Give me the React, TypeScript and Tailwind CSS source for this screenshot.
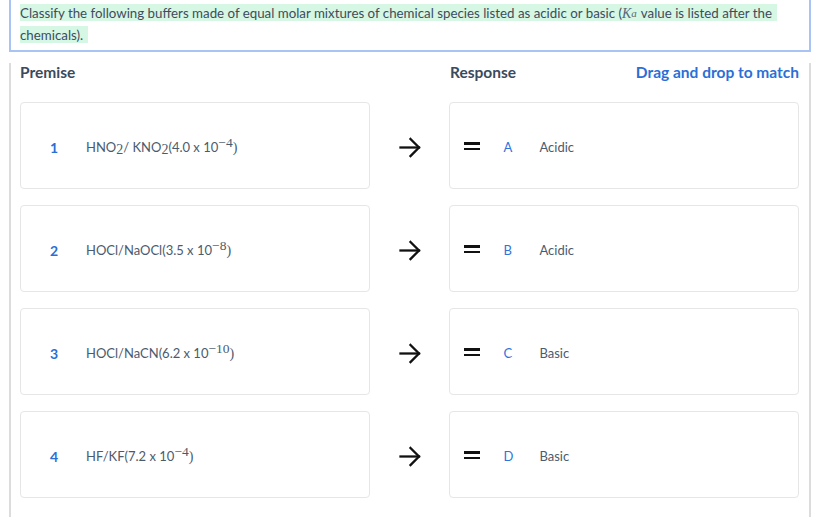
const premises = [
  { n: "1", pre: "HNO", sub: true, mid: "/ KNO", sub2: true, val: "(4.0 x 10", exp: "\u22124" },
  { n: "2", pre: "HOCl/NaOCl", sub: false, mid: "", sub2: false, val: "(3.5 x 10", exp: "\u22128" },
  { n: "3", pre: "HOCl/NaCN", sub: false, mid: "", sub2: false, val: "(6.2 x 10", exp: "\u221210" },
  { n: "4", pre: "HF/KF", sub: false, mid: "", sub2: false, val: "(7.2 x 10", exp: "\u22124" },
];

const responses = [
  { l: "A", t: "Acidic" },
  { l: "B", t: "Acidic" },
  { l: "C", t: "Basic" },
  { l: "D", t: "Basic" },
];

function Sub2() {
  return <span className="text-[14px] font-['Liberation_Serif',serif] relative top-[2px]">2</span>;
}

function Formula({ p }: { p: (typeof premises)[number] }) {
  return (
    <span className="text-[13px] text-[#4b5b6e] whitespace-pre">
      {p.pre}
      {p.sub && <Sub2 />}
      {p.mid}
      {p.sub2 && <Sub2 />}
      {p.val}
      <span className="font-['Liberation_Serif',serif] text-[13.5px] relative -top-[5px]">{p.exp}</span>
      <span className="font-['Liberation_Serif',serif] text-[14px]">)</span>
    </span>
  );
}

function Arrow() {
  return (
    <svg width="24" height="24" viewBox="0 0 24 24" fill="none" stroke="#111" strokeWidth="2.3" strokeLinecap="square">
      <path d="M2.5 12.5H21" />
      <path d="M12.5 4l8.5 8.5-8.5 8.5" />
    </svg>
  );
}

function Handle() {
  return (
    <div className="flex flex-col gap-[3px] w-[16px] -mt-[3px]">
      <div className="h-[2.5px] bg-[#111]" />
      <div className="h-[2.5px] bg-[#111]" />
    </div>
  );
}

export default function App() {
  return (
    <div className="w-[819px] h-[517px] overflow-hidden bg-white font-['Lato',sans-serif]">
      <div className="ml-[9px] w-[802px] h-[52px] border-x-2 border-b-2 border-[#a9c3f4] pl-[9px] pr-[10px] pt-[2px] text-[13.3px] leading-[21.5px] text-[#3d4c5e]">
        <span className="bg-[#d6f7e3] box-decoration-clone py-[0.5px] pr-[5px]">
          Classify the following buffers made of equal molar mixtures of chemical species listed as acidic or basic (
          <i className="font-['Liberation_Serif',serif] text-[14px] text-[#58677a]">K</i>
          <i className="font-['Liberation_Serif',serif] text-[11px] text-[#58677a] mr-[4px]">a</i>
          value is listed after the chemicals).
        </span>
      </div>
      <div className="ml-[9px] w-[802px] h-[500px] border-x-2 border-[#dcdcdc] pl-[9px] pr-[10px]">
        <div className="flex items-center h-[20px] mt-[11px] text-[15.5px] font-bold text-[#3b4a5c]">
          <span className="w-[430px]">Premise</span>
          <span className="flex-1">Response</span>
          <span className="text-[#2a6fd6]">Drag and drop to match</span>
        </div>
        <div className="mt-[19px] flex flex-col gap-4">
          {premises.map((p, i) => (
            <div key={p.n} className="flex items-center">
              <div className="w-[350px] h-[87px] rounded-[4px] border border-[#e6e6e6] flex items-center pl-[29px] pt-[4px]">
                <span className="w-[36px] text-[14px] font-bold text-[#2a6fd6]">{p.n}</span>
                <Formula p={p} />
              </div>
              <div className="w-[80px] flex justify-center pt-[2px]">
                <Arrow />
              </div>
              <div className="w-[350px] h-[87px] rounded-[4px] border border-[#e6e6e6] flex items-center pl-[14px] pt-[4px]">
                <Handle />
                <span className="ml-[23px] w-[36px] text-[13px] text-[#2f74dc]">{responses[i].l}</span>
                <span className="text-[13px] text-[#4b5b6e]">{responses[i].t}</span>
              </div>
            </div>
          ))}
        </div>
      </div>
    </div>
  );
}
